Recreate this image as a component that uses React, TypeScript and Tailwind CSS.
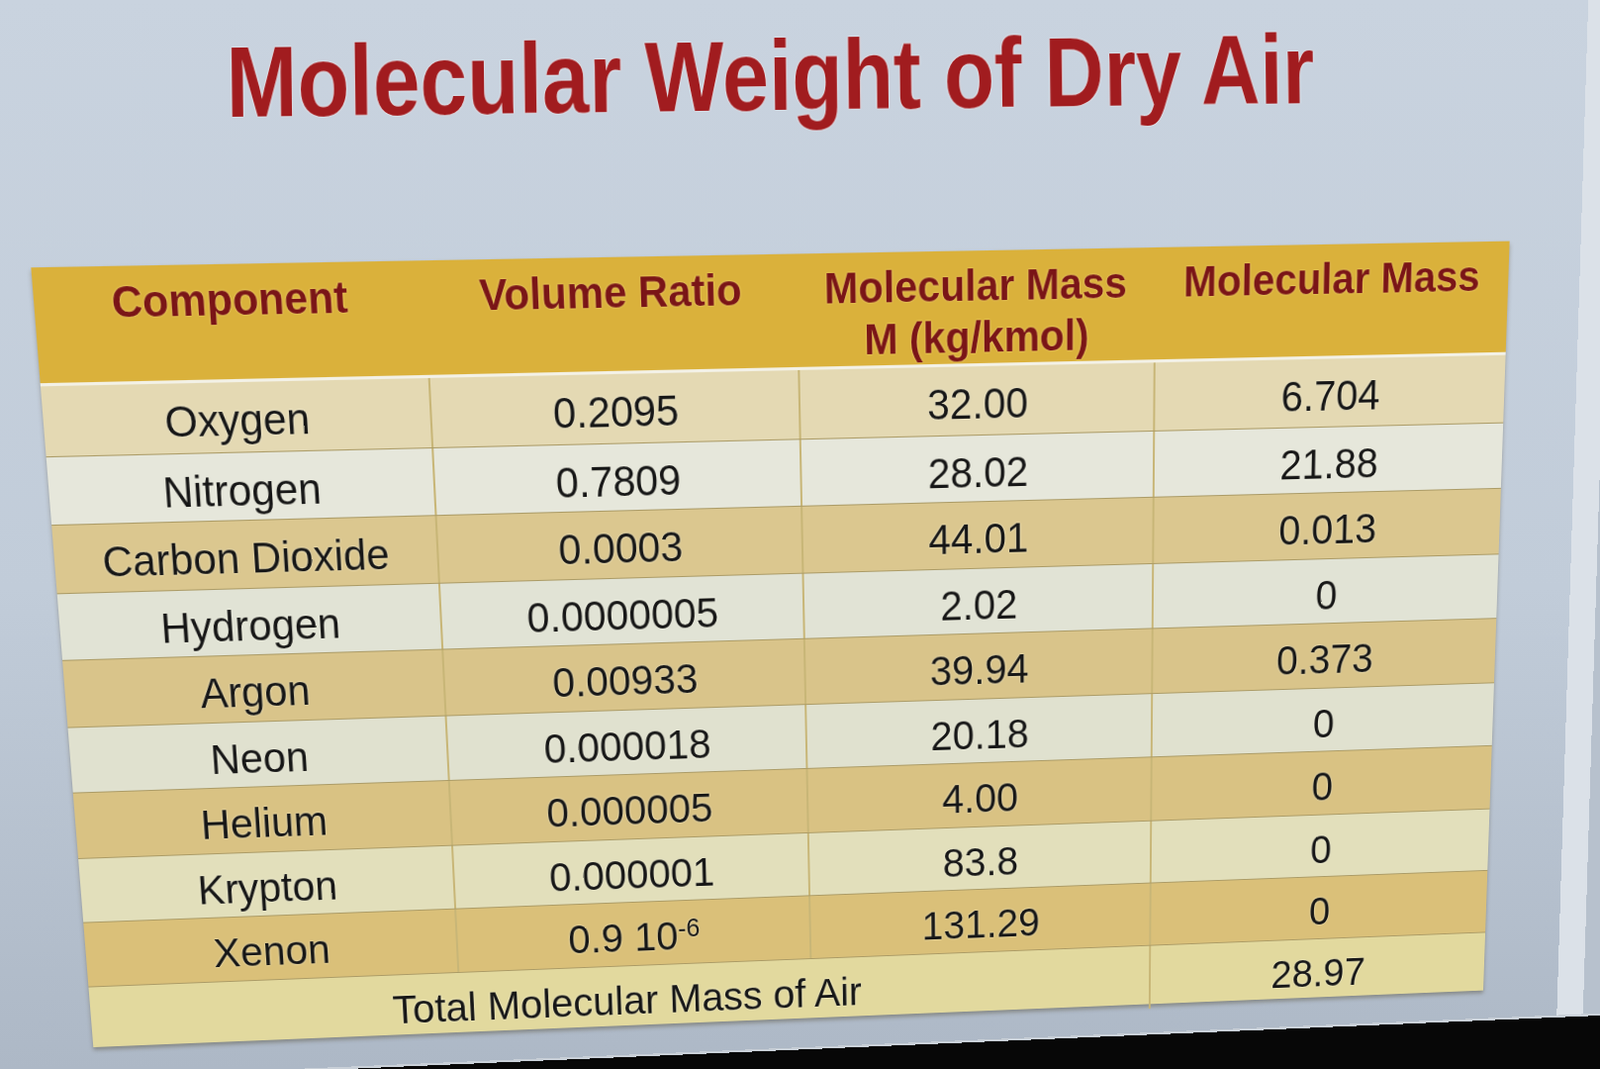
import React from "react";

type Row = { c: string; v: React.ReactNode; m: string; x: string; bg: string };

const rows: Row[] = [
  { c: "Oxygen", v: "0.2095", m: "32.00", x: "6.704", bg: "bg-[#e4d9b3]" },
  { c: "Nitrogen", v: "0.7809", m: "28.02", x: "21.88", bg: "bg-[#e6e7db]" },
  { c: "Carbon Dioxide", v: "0.0003", m: "44.01", x: "0.013", bg: "bg-[#dbc78f]" },
  { c: "Hydrogen", v: "0.0000005", m: "2.02", x: "0", bg: "bg-[#e1e3d5]" },
  { c: "Argon", v: "0.00933", m: "39.94", x: "0.373", bg: "bg-[#d9c48a]" },
  { c: "Neon", v: "0.000018", m: "20.18", x: "0", bg: "bg-[#e0e1cf]" },
  { c: "Helium", v: "0.000005", m: "4.00", x: "0", bg: "bg-[#d9c283]" },
  { c: "Krypton", v: "0.000001", m: "83.8", x: "0", bg: "bg-[#e2dfbb]" },
  {
    c: "Xenon",
    v: (
      <>
        0.9 10<sup className="text-[27px]">-6</sup>
      </>
    ),
    m: "131.29",
    x: "0",
    bg: "bg-[#dac079]",
  },
];

function T({ children }: { children: React.ReactNode }) {
  return <span className="inline-block scale-x-[0.94] whitespace-nowrap">{children}</span>;
}

function HeadCell({ lines }: { lines: string[] }) {
  return (
    <div className="flex flex-col items-center pt-[8px] leading-[50px]">
      {lines.map((l) => (
        <T key={l}>{l}</T>
      ))}
    </div>
  );
}

function BodyCell({ children, first }: { children: React.ReactNode; first?: boolean }) {
  return (
    <div
      className={
        "flex items-center justify-center pt-[4px] " +
        (first ? "" : "border-l-2 border-[#c8b677]")
      }
    >
      <T>{children}</T>
    </div>
  );
}

export default function App() {
  return (
    <div className="relative w-[1617px] h-[1080px] overflow-hidden font-['Liberation_Sans',Arial,sans-serif] [background-image:linear-gradient(177.56deg,transparent_95.1%,#c9d0d8_95.1%,#c9d0d8_95.3%,#070707_95.3%),linear-gradient(91.78deg,transparent_97.25%,#dbe1e8_97.25%,#dbe1e8_98.85%,#b7c1cd_98.85%),linear-gradient(180deg,#c9d3df_0%,#c1ccd9_55%,#adb8c6_100%)]">
      {/* Title */}
      <div className="flex justify-center pt-[26px] pr-[46px]">
        <h1 className="[transform:perspective(1200px)_rotateY(1.6deg)_rotate(-0.68deg)] text-[101px] leading-none font-bold text-[#a11c1f] whitespace-nowrap [text-shadow:0_0_2px_#ffffff,0_0_1px_#ffe9ec]">
          <span className="inline-block scale-x-[0.834]">Molecular Weight of Dry Air</span>
        </h1>
      </div>

      {/* Table */}
      <div className="ml-[79px] mt-[140px] w-[1449px] h-[775px] flex flex-col [transform:perspective(1200px)_rotateX(-5.4deg)_rotateY(2.2deg)_rotate(-1.5deg)_skewX(-0.3deg)] shadow-[0_3px_4px_rgba(60,50,20,0.35)]">
        <div className="grid grid-cols-[371px_362px_356px_360px] h-[109px] bg-[#dab13b] text-[43px] font-bold text-[#7a1517] [text-shadow:0_0_2px_#f6dc7c,0_0_1px_#f6dc7c]">
          <HeadCell lines={["Component"]} />
          <HeadCell lines={["Volume Ratio"]} />
          <HeadCell lines={["Molecular Mass", "M (kg/kmol)"]} />
          <HeadCell lines={["Molecular Mass"]} />
        </div>
        <div className="h-[3px] bg-[#f3f1e6]" />
        <div className="flex flex-col text-[43px] text-[#161616] [text-shadow:0_0_2px_rgba(255,255,240,0.9)]">
          {rows.map((r, i) => (
            <div
              key={r.c}
              className={
                "grid grid-cols-[371px_362px_356px_360px] h-[66.5px] " +
                r.bg +
                (i > 0 ? " border-t border-[#ab9b66]" : "")
              }
            >
              <BodyCell first>{r.c}</BodyCell>
              <BodyCell>{r.v}</BodyCell>
              <BodyCell>{r.m}</BodyCell>
              <BodyCell>{r.x}</BodyCell>
            </div>
          ))}
          <div className="grid grid-cols-[1089px_360px] h-[64.5px] bg-[#e2d99e] border-t border-[#ab9b66]">
            <BodyCell first>Total Molecular Mass of Air</BodyCell>
            <BodyCell>28.97</BodyCell>
          </div>
        </div>
      </div>
    </div>
  );
}
